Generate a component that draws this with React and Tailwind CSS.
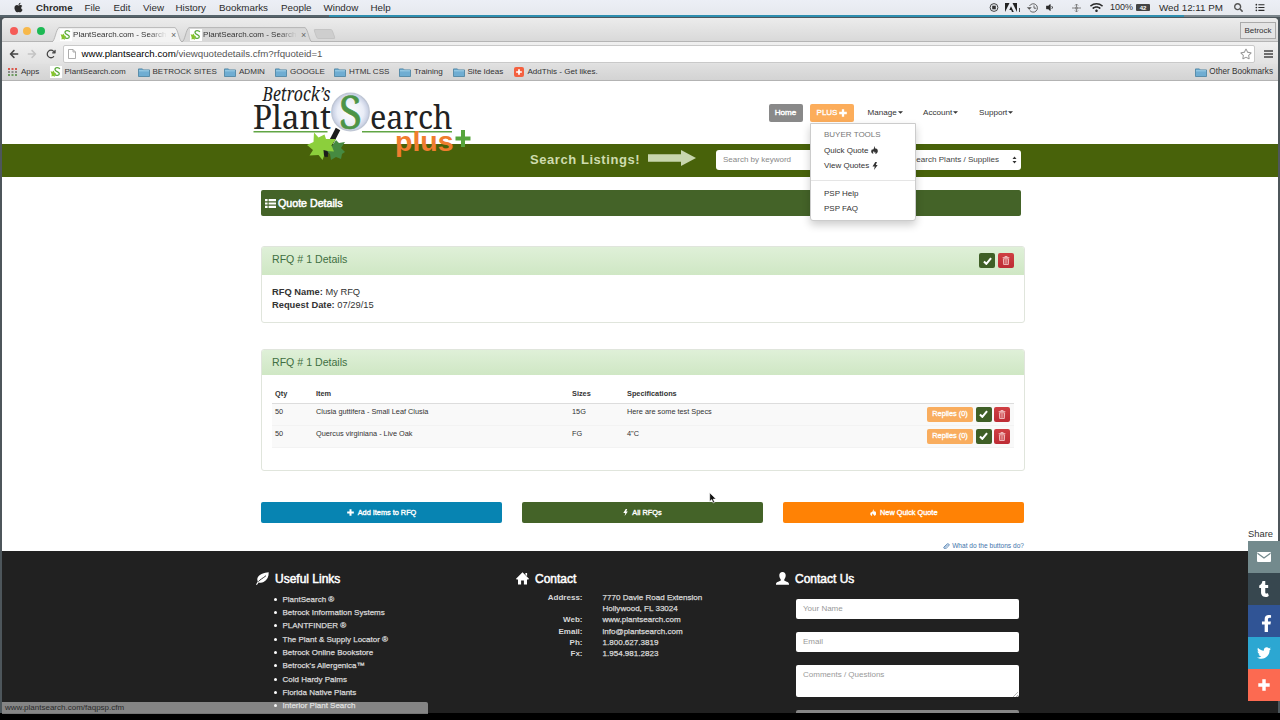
import {
  FaApple,
  FaArrowLeft,
  FaArrowRight,
  FaFacebookF,
  FaListUl,
  FaRegStar,
  FaSearch,
  FaTumblr,
  FaTwitter,
  FaVolumeDown,
  FaWifi,
} from "react-icons/fa";
import { FaArrowRotateRight } from "react-icons/fa6";

const menus = [
  { label: "File", width: "w-[29px]" },
  { label: "Edit", width: "w-[29.5px]" },
  { label: "View", width: "w-[32.5px]" },
  { label: "History", width: "w-[43.5px]" },
  { label: "Bookmarks", width: "w-[62px]" },
  { label: "People", width: "w-[42.5px]" },
  { label: "Window", width: "w-[47px]" },
  { label: "Help", width: "w-[30px]" },
];

const folders = [
  { label: "BETROCK SITES", width: "w-[86.5px]" },
  { label: "ADMIN", width: "w-[51px]" },
  { label: "GOOGLE", width: "w-[59px]" },
  { label: "HTML CSS", width: "w-[65px]" },
  { label: "Training", width: "w-[53.5px]" },
  { label: "Site Ideas", width: "w-[61px]" },
];

const links = [
  "PlantSearch ®",
  "Betrock Information Systems",
  "PLANTFINDER ®",
  "The Plant & Supply Locator ®",
  "Betrock Online Bookstore",
  "Betrock's Allergenica™",
  "Cold Hardy Palms",
  "Florida Native Plants",
  "Interior Plant Search",
];

const contact = [
  ["Address:", "7770 Davie Road Extension"],
  ["", "Hollywood, FL 33024"],
  ["Web:", "www.plantsearch.com"],
  ["Email:", "info@plantsearch.com"],
  ["Ph:", "1.800.627.3819"],
  ["Fx:", "1.954.981.2823"],
];

const items = [
  { qty: 50, item: "Clusia guttifera - Small Leaf Clusia", size: "15G", specs: "Here are some test Specs" },
  { qty: 50, item: "Quercus virginiana - Live Oak", size: "FG", specs: "4\"C" },
];

function Check({ className }) {
  return (
    <svg className={className} viewBox="0 0 10 9">
      <path d="M1 5l2.700 2.700L9 1.300" fill="none" stroke="currentColor" strokeWidth="2.300" />
    </svg>
  );
}

function Plus({ className }) {
  return (
    <svg className={className} viewBox="0 0 8 8">
      <path d="M4 .2v7.600M.2 4h7.600" stroke="currentColor" strokeWidth="2.300" />
    </svg>
  );
}

function Flame({ className }) {
  return (
    <svg className={className} viewBox="0 0 8 9">
      <path d="M3.800 0c.9 1.200 1 2.400.7 3.400.5-.2.800-.7.9-1.200.3.400.4.800.4 1.200l.7-.6C7.500 4 8 5.200 7.700 6.600 7.400 8 6.200 9 4.900 9c.4-.7.400-1.500-.2-2.200-.2.500-.5.700-.9.800.1-.8-.1-1.500-.6-2-.2 1-.9 1.500-.8 2.300 0 .4.200.8.400 1.100C1.200 8.700.2 7.600.2 6.300c0-1.200.7-2 1.100-2.900.4.300.6.700.6 1.200C3.100 3.500 3.900 1.800 3.800 0z" fill="currentColor" />
    </svg>
  );
}

function Bolt({ className }) {
  return (
    <svg className={className} viewBox="0 0 6 9">
      <path d="M3.300 0h1.900L3.900 3.300H6L1.900 9l.8-3.900H.2z" fill="currentColor" />
    </svg>
  );
}

function Leaf() {
  return (
    <svg className="size-[13px]" viewBox="0 0 13 13">
      <path d="M12.700.3C8 .8 3.500 2.200 1.800 5.300.9 7 1.300 8.400 1.800 9.400L0 12.400l.9.500 1.700-2.500c1.200.6 3.200.7 5-.3C11.300 8 12.900 4.600 12.700.3z" fill="#fff" />
      <path d="M2.400 9.600C4 7.500 7 6.200 10 3.700" fill="none" stroke="#212121" strokeWidth=".9" />
    </svg>
  );
}

function House() {
  return (
    <svg className="size-[13px]" viewBox="0 0 13 13">
      <path d="M6.500.2L13 6.700l-.6.700H11V12.500H7.900V8.500H5.100v4H2V7.400H.6L0 6.700zM9.400 1h1.700v3.200L9.400 2.500z" fill="#fff" />
    </svg>
  );
}

function Person() {
  return (
    <svg className="size-[13px]" viewBox="0 0 13 13">
      <path d="M6.500 0c2 0 3.200 1.400 3.200 3.300 0 1.700-.6 3-1.400 3.900v1.300c0 .8 4.700 1.200 4.700 3.500v.7H0V12c0-2.300 4.700-2.700 4.700-3.500V7.200C3.900 6.300 3.300 5 3.300 3.300 3.300 1.400 4.500 0 6.500 0z" fill="#fff" />
    </svg>
  );
}

function Trash({ className }) {
  return (
    <svg className={className} viewBox="0 0 10 12" fill="none" stroke="currentColor">
      <path d="M.5 2.300h9M3.500 2V.8h3V2" strokeWidth="1.300" />
      <path d="M1.500 3.800h7l-.4 7.600H1.900z" strokeWidth="1.200" />
      <path d="M3.700 4.500v6M5 4.500v6M6.300 4.500v6" strokeWidth=".8" />
    </svg>
  );
}

function Folder() {
  return (
    <svg className="h-[9px] w-[12px] shrink-0" viewBox="0 0 12 9">
      <path d="M.5.900h3.900l.9 1h6.200v6.600H.5z" fill="#6fadd2" stroke="#47809f" strokeWidth=".8" />
      <path d="M1 2.800h10" stroke="#a9d6ec" strokeWidth=".9" />
    </svg>
  );
}

function Favicon() {
  return (
    <svg className="h-3 w-3 shrink-0" viewBox="0 0 12 12">
      <rect width="12" height="12" fill="#fff" />
      <path d="M9.800 3C9 1.200 5 1 5 3.400c0 2.400 4.300 2 4.300 4.300 0 2-3.500 2.300-4.500.6" fill="none" stroke="#5aa93a" strokeWidth="1.300" />
      <path d="M.6 5.200l2 .6 1-1.300.9 2 1.600.7-1.300 1.500.2 2-2-.7-1.500.6.2-2z" fill="#86c52c" />
    </svg>
  );
}

function Caret() {
  return (
    <svg className="ml-px inline-block h-[3px] w-[5px] align-middle" viewBox="0 0 6 3">
      <path d="M0 0h6L3 3z" fill="#333" />
    </svg>
  );
}

function RowActions() {
  return (
    <>
      <button className="flex h-[15px] w-4 items-center justify-center rounded-[2px] bg-[#3f5f26] text-white">
        <Check className="h-[8px] w-[9px]" />
      </button>
      <button className="flex h-[15px] w-4 items-center justify-center rounded-[2px] bg-gradient-to-b from-[#cf3f43] to-[#bd2b34] text-[#f5c9c9]">
        <Trash className="h-[9px] w-[8px]" />
      </button>
    </>
  );
}

function Logo() {
  return (
    <svg className="absolute top-0 left-[246px] z-10 h-[84px] w-[232px] overflow-visible" viewBox="248 81 232 84">
      <defs>
        <radialGradient id="lens">
          <stop offset="0" stopColor="#fff" />
          <stop offset=".7" stopColor="#e9edf7" />
          <stop offset="1" stopColor="#c3cbe0" />
        </radialGradient>
      </defs>
      <path d="M338 129l-14 27" stroke="#1c1c1c" strokeWidth="5" />
      <path d="M253.500 131.700h74M362 131.700h90" stroke="#61a544" strokeWidth="1.500" />
      <circle cx="350.500" cy="112" r="18.800" fill="url(#lens)" stroke="#bfc6d4" strokeWidth="1.200" />
      <g fontFamily="'Noto Serif','Liberation Serif',serif" fill="#222">
        <text x="262.500" y="100.500" fontSize="19.500" fontStyle="italic" textLength="68" lengthAdjust="spacingAndGlyphs">Betrock’s</text>
        <text x="253" y="128.500" fontSize="32" textLength="78" lengthAdjust="spacingAndGlyphs">Plant</text>
        <text x="370" y="128.500" fontSize="32" textLength="82.500" lengthAdjust="spacingAndGlyphs">earch</text>
        <text x="339" y="129" fontSize="45.500" textLength="23" lengthAdjust="spacingAndGlyphs" fill="#4c9447" stroke="#4c9447" strokeWidth=".6">S</text>
      </g>
      <path d="M345 142l-6 1-3-3-4 6-6 5 4 3 1 6 5-3 5 2 1-5 3-2-4-4z" fill="#468a41" />
      <path d="M314 132.500l4.500 5 6-3 1.500 4.500 10 0-4.500 6.500 2.500 6-7-.5-3 5-1.500 4-4-5-9 .5 3.500-5.500-6-5 6.500-3z" fill="#8ccf3c" />
      <path d="M323.500 150l4 1 .5 6-4-1.500z" fill="#1c1c1c" />
      <text x="395" y="150.500" fontFamily="Liberation Sans, sans-serif" fontWeight="700" fontSize="27.500" textLength="58.500" lengthAdjust="spacingAndGlyphs" fill="#f07d2e">plus</text>
      <path d="M463 130v17M455.500 138.500h15" stroke="#57a53c" strokeWidth="4" />
    </svg>
  );
}

function MenuBar() {
  return (
    <div className="flex h-[15px] items-center bg-gradient-to-b from-[#eceff6] to-[#e6e9ee] text-[9.800px] leading-none text-[#2b2b2b]">
      <FaApple className="ml-[13px] size-[11px]" />
      <span className="ml-[12px] w-[48.500px] text-[9.700px] font-bold">Chrome</span>
      {menus.map((m) => (
        <span key={m.label} className={m.width}>
          {m.label}
        </span>
      ))}
      <div className="ml-auto flex items-center">
        <svg className="mr-[6px] h-[9px] w-[10px]" viewBox="0 0 10 9">
          <circle cx="5" cy="4.500" r="3.900" fill="none" stroke="#444" />
          <rect x="3.200" y="2.700" width="3.600" height="3.600" fill="#333" />
        </svg>
        <svg className="mr-[5px] h-[9px] w-[16px]" viewBox="0 0 16 9">
          <path d="M0 0h4.500L0 9zM12 0H7.500L12 9zM6 3.200L8.800 9H7L6.200 7H4.300z" fill="#222" />
          <path d="M14.500 5v4" stroke="#222" strokeWidth=".8" />
        </svg>
        <svg className="mr-[6px] h-[10px] w-[13px]" viewBox="0 0 13 10">
          <path d="M3.500 3a4.200 4.200 0 1 1 .3 4.400M8 2.500V5.200h2.200" fill="none" stroke="#555" strokeWidth=".9" />
          <path d="M.8 4.200h5L3.300 6.800z" fill="#555" />
        </svg>
        <FaVolumeDown className="mr-[18px] size-[9px]" />
        <svg className="mr-[9px] h-[8px] w-[9px]" viewBox="0 0 9 8">
          <path d="M4.500 0v8M3 1.500L4.500 0 6 1.500M3 6.500L4.500 8 6 6.500M0 4h9" fill="none" stroke="#777" strokeWidth=".9" />
          <circle cx="4.500" cy="4" r="1.500" fill="#888" />
        </svg>
        <FaWifi className="mr-[7px] h-[11px] w-[13px]" />
        <span className="w-[26px] text-[9px]">100%</span>
        <span className="mr-[9px] flex h-[7px] w-[14px] items-center justify-center rounded-[1px] bg-[#444] text-[6px] font-bold text-white">42</span>
        <span className="w-[75px] text-[9.800px]">Wed 12:11 PM</span>
        <FaSearch className="mr-[11px] size-[9px] text-[#555]" />
        <FaListUl className="mr-[14px] h-[9px] w-[12px]" />
      </div>
    </div>
  );
}

function Tab({ active }) {
  return (
    <div className="relative h-[15px] w-[130px]">
      <svg className="absolute inset-0 h-[15px] w-[130px]" viewBox="0 0 130 15">
        <path
          d="M0 15C3 14 4 2 7 .6h116C126 2 127 14 130 15"
          fill={active ? "#f3f3f3" : "#d8d8d8"}
          stroke="#aaa"
          strokeWidth=".8"
        />
      </svg>
      <div className="relative flex h-[16px] items-center pl-[8px]">
        <Favicon />
        <span className="ml-[1px] w-[94px] overflow-hidden text-[8px] whitespace-nowrap [mask-image:linear-gradient(to_right,#000_80%,transparent)]">
          PlantSearch.com - Search
        </span>
        <span className="ml-[4px] text-[9px] text-[#666]">×</span>
      </div>
    </div>
  );
}

function BrowserChrome() {
  return (
    <div className="rounded-t-[4px] bg-[#dedede] leading-none text-[#333]">
      <div className="flex h-[24px] items-end rounded-t-[4px] border-b border-[#b5b5b5] bg-gradient-to-b from-[#ececec] to-[#d9d9d9]">
        <div className="mb-[6px] ml-[8px] flex gap-[5.300px]">
          <span className="size-2 rounded-full bg-[#f55c57]" />
          <span className="size-2 rounded-full bg-[#f7b84a]" />
          <span className="size-2 rounded-full bg-[#1db954]" />
        </div>
        <div className="-mb-px ml-[7.500px] flex">
          <Tab active />
          <Tab />
        </div>
        <span className="mb-[2px] ml-[3px] h-[10px] w-[19px] skew-x-[20deg] rounded-[2px] border border-[#c4c4c4] bg-[#cecece]" />
        <span className="mr-[2px] mb-[2px] ml-auto flex h-[17px] w-[36px] items-center justify-center border border-[#aaa] bg-[#e4e4e4] text-[8px]">
          Betrock
        </span>
      </div>
      <div className="flex h-[22px] items-center bg-gradient-to-b from-[#f0f0f0] to-[#e2e2e2] pt-px">
        <FaArrowLeft className="ml-[7px] size-[10px] text-[#444]" />
        <FaArrowRight className="ml-[8px] size-[10px] text-[#c4c4c4]" />
        <FaArrowRotateRight className="ml-[9px] size-[10px] text-[#444]" />
        <div className="ml-[7px] flex h-[18px] w-[1192px] items-center rounded-[2px] border border-[#c9c9c9] bg-white">
          <svg className="ml-[4px] h-[10px] w-[8px]" viewBox="0 0 8 10">
            <path d="M.5.5h4.500l2.500 2.500v6.500h-7zM5 .5V3h2.500" fill="#fff" stroke="#999" strokeWidth=".8" />
          </svg>
          <span className="ml-[5.500px] text-[9.700px] text-[#555]">
            <span className="text-black">www.plantsearch.com</span>/viewquotedetails.cfm?rfquoteid=1
          </span>
          <FaRegStar className="mr-[2px] ml-auto size-[12px] text-[#999]" />
        </div>
        <svg className="ml-[8.500px] h-[8px] w-[9px]" viewBox="0 0 9 8">
          <path d="M0 1h9M0 4h9M0 7h9" stroke="#444" strokeWidth="1.700" />
        </svg>
      </div>
      <div className="flex h-[17px] items-center border-b border-[#b3b3b3] bg-gradient-to-b from-[#e0e0e0] to-[#d3d3d3] text-[8.050px] whitespace-nowrap">
        <svg className="ml-[6px] h-[8px] w-[9px]" viewBox="0 0 9 8">
          <path d="M0 1h9" stroke="#d9584c" strokeWidth="1.800" strokeDasharray="2 1.500" />
          <path d="M0 4h9" stroke="#8a8a8a" strokeWidth="1.800" strokeDasharray="2 1.500" />
          <path d="M0 7h9" stroke="#6e9a60" strokeWidth="1.800" strokeDasharray="2 1.500" />
        </svg>
        <span className="ml-[4px] w-[28.500px]">Apps</span>
        <Favicon />
        <span className="ml-[3px] w-[73px]">PlantSearch.com</span>
        {folders.map((f) => (
          <span key={f.label} className={`flex items-center gap-[3px] ${f.width}`}>
            <Folder />
            {f.label}
          </span>
        ))}
        <span className="flex size-[10px] items-center justify-center rounded-[2px] bg-[#f4603f] text-white">
          <Plus className="size-[6px]" />
        </span>
        <span className="ml-[4px]">AddThis - Get likes.</span>
        <span className="mr-[5px] ml-auto flex items-center gap-[2.500px] text-[8.200px]">
          <Folder />
          Other Bookmarks
        </span>
      </div>
    </div>
  );
}

function PlusMenu() {
  return (
    <div className="absolute top-[19px] left-0 z-20 h-[98px] w-[106px] rounded-b-[3px] border border-[#ccc] bg-white pl-[13px] text-[8px] leading-[15.500px] text-[#333] shadow-[0_4px_8px_rgba(0,0,0,0.2)]">
      <div className="mt-[3px] text-[#777]">BUYER TOOLS</div>
      <div className="flex items-center gap-[3px]">
        Quick Quote <Flame className="h-[8px] w-[7px]" />
      </div>
      <div className="flex items-center gap-[3px]">
        View Quotes <Bolt className="h-[8px] w-[6px]" />
      </div>
      <div className="mt-[6px] mb-[5px] -ml-[13px] h-px bg-[#e5e5e5]" />
      <div>PSP Help</div>
      <div>PSP FAQ</div>
    </div>
  );
}

function SiteHeader() {
  return (
    <header className="relative">
      <Logo />
      <nav className="flex h-[63px] items-start pt-[23px] pl-[766.500px] text-[8.100px] leading-[18px] text-[#333]">
        <span className="w-[34px] rounded-[2px] bg-[#898989] text-center text-white [-webkit-text-stroke:0.4px_white]">Home</span>
        <div className="relative ml-[7.500px] w-[44px]">
          <span className="flex items-center justify-center gap-[2px] rounded-[2px] bg-[#fcad5b] text-[8px] text-white [-webkit-text-stroke:0.3px_white]">
            PLUS <Plus className="size-[8px]" />
          </span>
          <PlusMenu />
        </div>
        <span className="ml-[13.500px] w-[55.500px]">Manage<Caret /></span>
        <span className="w-[56px]">Account<Caret /></span>
        <span>Support<Caret /></span>
      </nav>
      <div className="flex h-[33px] items-center bg-[#48620a] pl-[528px]">
        <span className="-mt-[3px] w-[118px] text-[13px] leading-none font-bold tracking-[0.560px] whitespace-nowrap text-[#cfdcae]">
          Search Listings!
        </span>
        <svg className="-mt-[5px] h-[16px] w-[48px]" viewBox="0 0 48 16">
          <path d="M0 4.200h33V0l15 8-15 8v-4.200H0z" fill="#c8d6ae" />
        </svg>
        <div className="-mt-px ml-[20px] flex h-5 w-[150px] items-center rounded-l-[3px] bg-white pl-[7px] text-[8px] text-[#888]">
          Search by keyword
        </div>
        <div className="-mt-px ml-[10px] flex h-5 w-[145px] items-center justify-end rounded-r-[3px] bg-white text-[8.100px] text-[#444]">
          Search Plants / Supplies
          <svg className="mr-[4px] ml-[13px] h-[8px] w-[5px]" viewBox="0 0 5 8">
            <path d="M.5 3L2.500.5l2 2.500zM.5 5l2 2.500 2-2.500z" fill="#333" />
          </svg>
        </div>
      </div>
    </header>
  );
}

function Panel({ actions, headHeight, className, children }) {
  return (
    <section className={`w-[764px] rounded-[3px] border border-[#e0e5dc] bg-white ${className}`}>
      <div className={`flex justify-between rounded-t-[2px] bg-gradient-to-b from-[#dff0d8] to-[#cfe7c4] pl-[10px] ${headHeight}`}>
        <h3 className="pt-[5px] text-[10.600px] leading-[14px] text-[#3f6f42]">RFQ # 1 Details</h3>
        {actions}
      </div>
      {children}
    </section>
  );
}

function QuoteDetails() {
  return (
    <main className="h-[374px] bg-white pl-[259px] leading-none text-[#333]">
      <div className="h-[13px]" />
      <h2 className="flex h-[26px] w-[760px] items-center rounded-[2px] bg-[#446328] pl-[4px] text-[10.670px] text-white [-webkit-text-stroke:0.5px_white]">
        <svg className="mr-[2px] h-[9px] w-[11px]" viewBox="0 0 11 9">
          <path d="M0 1.200h2.600M3.600 1.200H11M0 4.500h2.600M3.600 4.500H11M0 7.800h2.600M3.600 7.800H11" stroke="#fff" strokeWidth="2.200" />
        </svg>
        Quote Details
      </h2>
      <Panel
        className="mt-[30px] h-[77px]"
        headHeight="h-[28px]"
        actions={
          <div className="mt-[6px] mr-[10px] flex gap-[3px]">
            <RowActions />
          </div>
        }
      >
        <div className="pt-[10.500px] pl-[10px] text-[9.330px] leading-[13.500px]">
          <p><b>RFQ Name:</b> My RFQ</p>
          <p><b>Request Date:</b> 07/29/15</p>
        </div>
      </Panel>
      <Panel className="mt-[26px] h-[122px]" headHeight="h-[25px]">
        <table className="mt-[9px] ml-[10px] w-[742px] table-fixed border-collapse text-left text-[7.330px]">
          <thead>
            <tr className="h-[19px] border-b-[1.500px] border-[#ddd]">
              <th className="w-[41px] pl-[3px]">Qty</th>
              <th className="w-[256px] pl-[3px]">Item</th>
              <th className="w-[55px] pl-[3px]">Sizes</th>
              <th className="pl-[3px]">Specifications</th>
              <th className="w-[90px]" />
            </tr>
          </thead>
          <tbody>
            {items.map((row) => (
              <tr key={row.item} className="h-[22px] border-b border-[#f3f3f3] bg-[#f9f9f9]">
                <td className="pb-[4px] pl-[3px]">{row.qty}</td>
                <td className="pb-[4px] pl-[3px]">{row.item}</td>
                <td className="pb-[4px] pl-[3px]">{row.size}</td>
                <td className="pb-[4px] pl-[3px]">{row.specs}</td>
                <td>
                  <div className="mr-[4px] flex items-center justify-end gap-[2.500px]">
                    <button className="h-[15px] w-[46px] rounded-[2px] bg-[#f9ad5e] text-[7.330px] text-white [-webkit-text-stroke:0.3px_white]">
                      Replies (0)
                    </button>
                    <RowActions />
                  </div>
                </td>
              </tr>
            ))}
          </tbody>
        </table>
      </Panel>
      <div className="mt-[31px] flex gap-5 text-[7.330px] text-white [-webkit-text-stroke:0.35px_white]">
        <button className="flex h-[21px] w-[241px] items-center justify-center gap-[4px] rounded-[2px] bg-[#0784b2]">
          <Plus className="size-[7px]" /> Add Items to RFQ
        </button>
        <button className="flex h-[21px] w-[241px] items-center justify-center gap-[4px] rounded-[2px] bg-[#446328]">
          <Bolt className="h-[7px] w-[5px]" /> All RFQs
        </button>
        <button className="flex h-[21px] w-[241px] items-center justify-center gap-[4px] rounded-[2px] bg-[#ff8205]">
          <Flame className="h-[7px] w-[6.500px]" /> New Quick Quote
        </button>
      </div>
      <a className="mt-[20px] flex w-[763px] items-center justify-end gap-[2px] text-[6.600px] text-[#3f74ab]">
        <svg className="h-[6px] w-[7px]" viewBox="0 0 7 6">
          <path d="M1.500 5L5 1.500M.8 4.200l3-3c1.300-1.200 3.200.2 2 1.600L3.300 5.200C2 6.300.2 5.300.8 4.200z" fill="none" stroke="#3f74ab" strokeWidth=".8" />
        </svg>
        What do the buttons do?
      </a>
    </main>
  );
}

function FooterTitle({ icon, children }) {
  return (
    <h3 className="flex h-[14px] items-center gap-[6px] text-[12px] leading-none text-white">
      {icon}
      <span className="pt-px [-webkit-text-stroke:0.5px_white]">{children}</span>
    </h3>
  );
}

function Footer() {
  return (
    <footer className="flex h-[162px] overflow-hidden bg-[#212121] pt-[20px] pl-[254px] text-[8px] text-[#d8d8d8]">
      <div className="w-[260px]">
        <FooterTitle icon={<Leaf />}>Useful Links</FooterTitle>
        <ul className="mt-[7.500px] pl-[17.500px] leading-[13.350px] [-webkit-text-stroke:0.25px_#d8d8d8]">
          {links.map((l) => (
            <li key={l} className="flex items-center gap-[6px]">
              <span className="size-[3px] rounded-full bg-white" />
              {l}
            </li>
          ))}
        </ul>
      </div>
      <div className="w-[260px]">
        <FooterTitle icon={<House />}>Contact</FooterTitle>
        <dl className="mt-[6.500px] grid grid-cols-[66.500px_1fr] gap-x-[20px] leading-[11.350px]">
          {contact.map(([k, v]) => (
            <div key={v} className="contents">
              <dt className="text-right font-bold">{k}</dt>
              <dd className="text-[8.050px] [-webkit-text-stroke:0.25px_#d8d8d8]">{v}</dd>
            </div>
          ))}
        </dl>
      </div>
      <div>
        <FooterTitle icon={<Person />}>Contact Us</FooterTitle>
        <form className="mt-[14px] ml-[20px] flex w-[223px] flex-col gap-[13px] leading-none text-[#999]">
          <div className="flex h-[20px] items-center rounded-[2px] bg-white pl-[7px]">Your Name</div>
          <div className="flex h-[20px] items-center rounded-[2px] bg-white pl-[7px]">Email</div>
          <div className="flex h-[32px] justify-between rounded-[2px] bg-white pt-[6px] pl-[7px]">
            Comments / Questions
            <svg className="h-[5px] w-[6px] self-end" viewBox="0 0 6 5">
              <path d="M0 5l5-5M3 5l2-2" stroke="#999" strokeWidth=".7" />
            </svg>
          </div>
          <div className="h-[10px] rounded-[2px] bg-[#858585]" />
        </form>
      </div>
    </footer>
  );
}

function ShareBar() {
  return (
    <aside className="absolute top-[527px] left-[1248px] z-30 w-8 text-[9.400px] leading-[14px] text-[#333]">
      Share
      <div className="flex h-8 items-center justify-center bg-[#738a8d]">
        <svg className="h-[10px] w-[14px]" viewBox="0 0 14 10">
          <rect width="14" height="10" rx="1" fill="#fff" />
          <path d="M.5 1.200L7 6l6.500-4.800" fill="none" stroke="#738a8d" strokeWidth="1.300" />
        </svg>
      </div>
      <div className="flex h-8 items-center justify-center bg-[#37474f] text-white">
        <FaTumblr className="size-[16px]" />
      </div>
      <div className="flex h-8 items-center justify-center bg-[#305495] pl-[5px] text-white">
        <FaFacebookF className="mt-1 size-[17px]" />
      </div>
      <div className="flex h-8 items-center justify-center bg-[#2ca7d2] text-white">
        <FaTwitter className="size-[14px]" />
      </div>
      <div className="flex h-8 items-center justify-center bg-[#fc6a51] text-white">
        <Plus className="size-[12px]" />
      </div>
    </aside>
  );
}

export default function App() {
  return (
    <div className="relative h-[720px] w-[1280px] overflow-hidden bg-black font-['Liberation_Sans',Arial,sans-serif]">
      <MenuBar />
      <div className="h-[3px] bg-[linear-gradient(to_right,#56646b_0_329px,#2e8fb0_329px_1184px,#7b858b_1184px)]" />
      <div className="-mt-px bg-[#4d565b] px-[2px] pt-px">
        <BrowserChrome />
        <div className="bg-white">
          <SiteHeader />
          <QuoteDetails />
        </div>
        <Footer />
      </div>
      <ShareBar />
      <div className="absolute top-[702px] left-[2px] z-20 h-[12px] w-[426px] rounded-tr-[2px] bg-[#e9e9e9]/50 pl-[3px] text-[8px] leading-[12px] text-[#2a2a2a]">
        www.plantsearch.com/faqpsp.cfm
      </div>
      <svg className="absolute top-[492px] left-[709px] z-30 h-[12px] w-[8px]" viewBox="0 0 8 12">
        <path d="M.7.700v8.800l2-1.900 1.400 3.300 1.500-.6L4.200 7.100H7z" fill="#111" stroke="#fff" strokeWidth=".6" />
      </svg>
    </div>
  );
}
